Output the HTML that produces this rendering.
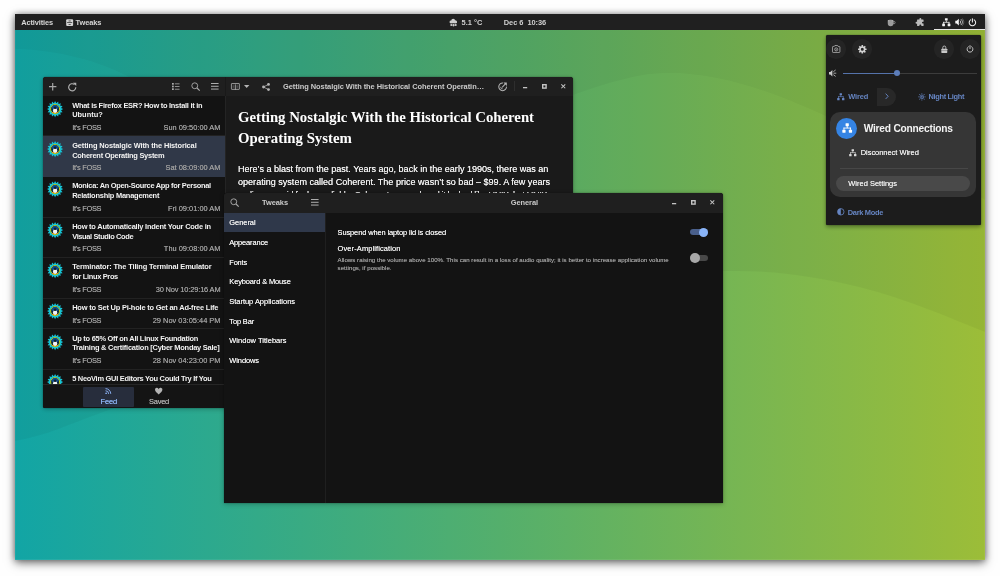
<!DOCTYPE html>
<html lang="en">
<head>
<meta charset="utf-8">
<title>GNOME desktop – Tweaks, NewsFlash and Quick Settings</title>
<style>
*{box-sizing:border-box;margin:0;padding:0}
html,body{width:1000px;height:576px;overflow:hidden;background:#fefefe}
body{position:relative;font-family:"Liberation Sans",sans-serif;color:#e6e6e6;font-size:7.45px;line-height:1}
.abs,#o div{position:absolute}
.t{position:absolute;white-space:pre;line-height:10px;height:10px;text-shadow:0 0 .45px currentColor}
.b{font-weight:bold;text-shadow:none}
#desk{position:absolute;left:15px;top:14px;width:970px;height:545.5px;overflow:hidden;
 background:linear-gradient(90deg,#12a5a5 0%,#33aa88 25%,#54af6c 50%,#78b652 75%,#9cbd38 100%);
 box-shadow:0 3px 9px rgba(0,0,0,.5),0 0 6px rgba(0,0,0,.32),inset 0 -1px 0 rgba(255,255,255,.07),inset 1px 0 0 rgba(255,255,255,.04),inset -1px 0 0 rgba(255,255,255,.05)}
#o{position:absolute;left:-15px;top:-14px;width:1000px;height:576px;will-change:transform}
#o svg{position:absolute;overflow:visible}
#topbar{left:15px;top:14px;width:970px;height:15.7px;background:#202020}
.sh{box-shadow:0 1px 5px rgba(0,0,0,.28),0 0 1px rgba(0,0,0,.8)}
.row{left:0;width:182px;border-bottom:1px solid #222}
.row.sel{background:#303848;border-bottom-color:#303848}
</style>
</head>
<body>
<div id="desk"><div id="o">
<svg id="wall" style="left:0;top:0" width="1000" height="576" viewBox="0 0 1000 576">
<path d="M15 14H985V200C950 180 900 150 830 118C790 100 730 73 668 73C640 73 610 82 573 95C530 112 490 155 420 170C330 190 230 130 127 76C100 62 60 50 15 49Z" fill="#000" opacity=".035"/>
<path d="M15 14H985V332C950 318 910 300 859 287C810 275 770 270 723 271C500 272 250 360 98 414C70 424 45 436 15 441Z" fill="#000" opacity=".04"/>
</svg>
<!-- ================= TOP BAR ================= -->
<div id="topbar"></div>
<svg style="left:65.55px;top:18.75px" width="7.3" height="7.3" viewBox="0 0 16 16" ><rect x=".4" y=".4" width="15.2" height="15.2" rx="2.2" fill="#d4d4d4"/><g fill="#202020"><rect x="2.4" y="7.3" width="11.2" height="1.5"/><rect x="5.6" y="3.6" width="4.8" height="1.5"/><rect x="5.6" y="11" width="4.8" height="1.5"/></g></svg>
<svg style="left:449.30px;top:17.70px" width="9" height="9" viewBox="0 0 18 18" ><g fill="#cdcdcd"><circle cx="8.4" cy="5.2" r="3.8"/><circle cx="12.8" cy="7.4" r="3"/><circle cx="4" cy="7.8" r="2.9"/><rect x="1.6" y="6.6" width="14.4" height="4" rx="2"/><circle cx="4.6" cy="14" r="2.1"/><circle cx="9" cy="14.5" r="2.3"/><circle cx="13.4" cy="14" r="2.1"/></g></svg>
<svg style="left:887.05px;top:18.50px" width="9.5" height="8" viewBox="0 0 19 16" ><g fill="#9c9c9c"><path d="M1.5 3.5h11.5v5.2a5.7 5.7 0 0 1-11.5 0z"/><ellipse cx="7.2" cy="3.7" rx="5.8" ry="2.3" fill="#bdbdbd"/><ellipse cx="7.2" cy="3.9" rx="4.4" ry="1.4" fill="#8a8a8a"/></g><circle cx="14" cy="7.2" r="2.300" fill="none" stroke="#9c9c9c" stroke-width="1.500"/></svg>
<svg style="left:915.70px;top:18.10px" width="8.6" height="8.6" viewBox="0 0 16 16" ><path fill="#bcbcbc" d="M6.4 1.6a1.7 1.7 0 0 1 3.4 0v1.2h3.3a1 1 0 0 1 1 1v3h-1.2a1.8 1.8 0 0 0 0 3.6h1.2v3.6a1 1 0 0 1-1 1H9.9v-1.2a1.8 1.8 0 0 0-3.6 0V15H3a1 1 0 0 1-1-1v-3.4H1a1.8 1.8 0 0 1 0-3.6h1V3.8a1 1 0 0 1 1-1h3.4z"/></svg>
<div style="left:934px;top:28.6px;width:51px;height:1px;background:#e8e8e8"></div>
<svg style="left:942.20px;top:18.10px" width="8.6" height="8.4" viewBox="0 0 16 16" ><g fill="#f4f4f4"><rect x="5.4" y="0.4" width="5.2" height="4.6" rx=".6"/><rect x="7.3" y="4.8" width="1.4" height="3.4"/><rect x="2.1" y="7.4" width="11.8" height="1.4"/><rect x="2.1" y="7.4" width="1.4" height="3.6"/><rect x="12.5" y="7.4" width="1.4" height="3.6"/><rect x="0.2" y="10.7" width="5.2" height="4.8" rx=".6"/><rect x="10.6" y="10.7" width="5.2" height="4.8" rx=".6"/></g></svg>
<svg style="left:954.80px;top:18.20px" width="8.8" height="8.2" viewBox="0 0 17 16" ><g fill="#f4f4f4"><path d="M.5 5.3h2.7L7.4 1.3v13.4L3.2 10.7H.5z"/><path d="M9.2 4.2a4.3 4.3 0 0 1 0 7.6v-1.7a2.8 2.8 0 0 0 0-4.2z"/><path d="M11.4 1.8a7 7 0 0 1 0 12.4l-.7-1.2a5.7 5.7 0 0 0 0-10z" opacity=".8"/><path d="M13.9.3a9.2 9.2 0 0 1 0 15.4l-.7-1.1a7.9 7.9 0 0 0 0-13.2z" opacity=".4"/></g></svg>
<svg style="left:968.40px;top:17.90px" width="8.8" height="8.8" viewBox="0 0 16 16" ><g stroke="#f4f4f4"><g fill="none" stroke-width="1.9" stroke-linecap="round"><path d="M8 1.2v6"/><path d="M4.7 3.4a5.9 5.9 0 1 0 6.6 0"/></g></g></svg>
<span class="t b" style="left:21.2px;top:17.9px;color:#d6d6d6;letter-spacing:-0.118px">Activities</span>
<span class="t b" style="left:75.6px;top:17.9px;color:#d6d6d6;letter-spacing:-0.121px">Tweaks</span>
<span class="t b" style="left:461.5px;top:17.9px;color:#d0d0d0;letter-spacing:0.039px">5.1 °C</span>
<span class="t b" style="left:503.8px;top:17.9px;color:#d0d0d0;letter-spacing:-0.051px">Dec 6  10:36</span>
<!-- ================= FEED READER ================= -->
<div class="sh" style="left:43px;top:76.6px;width:530.4px;height:331.8px;background:#1a1a1a;border-radius:3px 3px 2px 2px"></div>
<div style="left:43px;top:76.6px;width:530.4px;height:19.4px;background:#1f1f1f;border-radius:3px 3px 0 0"></div>
<div style="left:225px;top:76.6px;width:1px;height:19.4px;background:#191919"></div>
<div style="left:225px;top:96px;width:1px;height:312.4px;background:#242424"></div>
<div id="list" style="left:43px;top:96px;width:182px;height:312.4px;background:#131313;overflow:hidden;border-radius:0 0 0 2px">
<div class="row" style="top:0.00px;height:40.40px"></div>
<svg class="foss" style="left:4.2px;top:4.5px" width="16.2" height="16.2" viewBox="-10 -10 20 20"><path fill="#16c4d6" d="M0.00 -10.00L1.46 -7.36L3.83 -9.24L4.17 -6.24L7.07 -7.07L6.24 -4.17L9.24 -3.83L7.36 -1.46L10.00 0.00L7.36 1.46L9.24 3.83L6.24 4.17L7.07 7.07L4.17 6.24L3.83 9.24L1.46 7.36L0.00 10.00L-1.46 7.36L-3.83 9.24L-4.17 6.24L-7.07 7.07L-6.24 4.17L-9.24 3.83L-7.36 1.46L-10.00 0.00L-7.36 -1.46L-9.24 -3.83L-6.24 -4.17L-7.07 -7.07L-4.17 -6.24L-3.83 -9.24L-1.46 -7.36Z"/><circle r="7.6" fill="#16c4d6"/><circle r="5.9" fill="#0d2a3a"/><circle r="5.6" fill="none" stroke="#c9d414" stroke-width="1.2"/><path d="M-4.6-1.2a4.7 4.7 0 0 1 9.2 0L2.2 0.2h-4.4z" fill="#0c4f96"/><ellipse cx="0" cy="1.9" rx="2.7" ry="3" fill="#f4f4f4"/><ellipse cx="0" cy="-1.6" rx="1.7" ry="1.6" fill="#15222c"/><path d="M-3.6 3.6h2.2v1.3h-2.6zM1.4 3.6h2.2l.4 1.3H1.4z" fill="#f29a1c"/></svg>
<div class="row sel" style="top:40.40px;height:40.85px"></div>
<svg class="foss" style="left:4.2px;top:44.9px" width="16.2" height="16.2" viewBox="-10 -10 20 20"><path fill="#16c4d6" d="M0.00 -10.00L1.46 -7.36L3.83 -9.24L4.17 -6.24L7.07 -7.07L6.24 -4.17L9.24 -3.83L7.36 -1.46L10.00 0.00L7.36 1.46L9.24 3.83L6.24 4.17L7.07 7.07L4.17 6.24L3.83 9.24L1.46 7.36L0.00 10.00L-1.46 7.36L-3.83 9.24L-4.17 6.24L-7.07 7.07L-6.24 4.17L-9.24 3.83L-7.36 1.46L-10.00 0.00L-7.36 -1.46L-9.24 -3.83L-6.24 -4.17L-7.07 -7.07L-4.17 -6.24L-3.83 -9.24L-1.46 -7.36Z"/><circle r="7.6" fill="#16c4d6"/><circle r="5.9" fill="#0d2a3a"/><circle r="5.6" fill="none" stroke="#c9d414" stroke-width="1.2"/><path d="M-4.6-1.2a4.7 4.7 0 0 1 9.2 0L2.2 0.2h-4.4z" fill="#0c4f96"/><ellipse cx="0" cy="1.9" rx="2.7" ry="3" fill="#f4f4f4"/><ellipse cx="0" cy="-1.6" rx="1.7" ry="1.6" fill="#15222c"/><path d="M-3.6 3.6h2.2v1.3h-2.6zM1.4 3.6h2.2l.4 1.3H1.4z" fill="#f29a1c"/></svg>
<div class="row" style="top:81.25px;height:40.60px"></div>
<svg class="foss" style="left:4.2px;top:85.3px" width="16.2" height="16.2" viewBox="-10 -10 20 20"><path fill="#16c4d6" d="M0.00 -10.00L1.46 -7.36L3.83 -9.24L4.17 -6.24L7.07 -7.07L6.24 -4.17L9.24 -3.83L7.36 -1.46L10.00 0.00L7.36 1.46L9.24 3.83L6.24 4.17L7.07 7.07L4.17 6.24L3.83 9.24L1.46 7.36L0.00 10.00L-1.46 7.36L-3.83 9.24L-4.17 6.24L-7.07 7.07L-6.24 4.17L-9.24 3.83L-7.36 1.46L-10.00 0.00L-7.36 -1.46L-9.24 -3.83L-6.24 -4.17L-7.07 -7.07L-4.17 -6.24L-3.83 -9.24L-1.46 -7.36Z"/><circle r="7.6" fill="#16c4d6"/><circle r="5.9" fill="#0d2a3a"/><circle r="5.6" fill="none" stroke="#c9d414" stroke-width="1.2"/><path d="M-4.6-1.2a4.7 4.7 0 0 1 9.2 0L2.2 0.2h-4.4z" fill="#0c4f96"/><ellipse cx="0" cy="1.9" rx="2.7" ry="3" fill="#f4f4f4"/><ellipse cx="0" cy="-1.6" rx="1.7" ry="1.6" fill="#15222c"/><path d="M-3.6 3.6h2.2v1.3h-2.6zM1.4 3.6h2.2l.4 1.3H1.4z" fill="#f29a1c"/></svg>
<div class="row" style="top:121.85px;height:40.30px"></div>
<svg class="foss" style="left:4.2px;top:125.9px" width="16.2" height="16.2" viewBox="-10 -10 20 20"><path fill="#16c4d6" d="M0.00 -10.00L1.46 -7.36L3.83 -9.24L4.17 -6.24L7.07 -7.07L6.24 -4.17L9.24 -3.83L7.36 -1.46L10.00 0.00L7.36 1.46L9.24 3.83L6.24 4.17L7.07 7.07L4.17 6.24L3.83 9.24L1.46 7.36L0.00 10.00L-1.46 7.36L-3.83 9.24L-4.17 6.24L-7.07 7.07L-6.24 4.17L-9.24 3.83L-7.36 1.46L-10.00 0.00L-7.36 -1.46L-9.24 -3.83L-6.24 -4.17L-7.07 -7.07L-4.17 -6.24L-3.83 -9.24L-1.46 -7.36Z"/><circle r="7.6" fill="#16c4d6"/><circle r="5.9" fill="#0d2a3a"/><circle r="5.6" fill="none" stroke="#c9d414" stroke-width="1.2"/><path d="M-4.6-1.2a4.7 4.7 0 0 1 9.2 0L2.2 0.2h-4.4z" fill="#0c4f96"/><ellipse cx="0" cy="1.9" rx="2.7" ry="3" fill="#f4f4f4"/><ellipse cx="0" cy="-1.6" rx="1.7" ry="1.6" fill="#15222c"/><path d="M-3.6 3.6h2.2v1.3h-2.6zM1.4 3.6h2.2l.4 1.3H1.4z" fill="#f29a1c"/></svg>
<div class="row" style="top:162.15px;height:40.50px"></div>
<svg class="foss" style="left:4.2px;top:166.2px" width="16.2" height="16.2" viewBox="-10 -10 20 20"><path fill="#16c4d6" d="M0.00 -10.00L1.46 -7.36L3.83 -9.24L4.17 -6.24L7.07 -7.07L6.24 -4.17L9.24 -3.83L7.36 -1.46L10.00 0.00L7.36 1.46L9.24 3.83L6.24 4.17L7.07 7.07L4.17 6.24L3.83 9.24L1.46 7.36L0.00 10.00L-1.46 7.36L-3.83 9.24L-4.17 6.24L-7.07 7.07L-6.24 4.17L-9.24 3.83L-7.36 1.46L-10.00 0.00L-7.36 -1.46L-9.24 -3.83L-6.24 -4.17L-7.07 -7.07L-4.17 -6.24L-3.83 -9.24L-1.46 -7.36Z"/><circle r="7.6" fill="#16c4d6"/><circle r="5.9" fill="#0d2a3a"/><circle r="5.6" fill="none" stroke="#c9d414" stroke-width="1.2"/><path d="M-4.6-1.2a4.7 4.7 0 0 1 9.2 0L2.2 0.2h-4.4z" fill="#0c4f96"/><ellipse cx="0" cy="1.9" rx="2.7" ry="3" fill="#f4f4f4"/><ellipse cx="0" cy="-1.6" rx="1.7" ry="1.6" fill="#15222c"/><path d="M-3.6 3.6h2.2v1.3h-2.6zM1.4 3.6h2.2l.4 1.3H1.4z" fill="#f29a1c"/></svg>
<div class="row" style="top:202.65px;height:30.80px"></div>
<svg class="foss" style="left:4.2px;top:206.7px" width="16.2" height="16.2" viewBox="-10 -10 20 20"><path fill="#16c4d6" d="M0.00 -10.00L1.46 -7.36L3.83 -9.24L4.17 -6.24L7.07 -7.07L6.24 -4.17L9.24 -3.83L7.36 -1.46L10.00 0.00L7.36 1.46L9.24 3.83L6.24 4.17L7.07 7.07L4.17 6.24L3.83 9.24L1.46 7.36L0.00 10.00L-1.46 7.36L-3.83 9.24L-4.17 6.24L-7.07 7.07L-6.24 4.17L-9.24 3.83L-7.36 1.46L-10.00 0.00L-7.36 -1.46L-9.24 -3.83L-6.24 -4.17L-7.07 -7.07L-4.17 -6.24L-3.83 -9.24L-1.46 -7.36Z"/><circle r="7.6" fill="#16c4d6"/><circle r="5.9" fill="#0d2a3a"/><circle r="5.6" fill="none" stroke="#c9d414" stroke-width="1.2"/><path d="M-4.6-1.2a4.7 4.7 0 0 1 9.2 0L2.2 0.2h-4.4z" fill="#0c4f96"/><ellipse cx="0" cy="1.9" rx="2.7" ry="3" fill="#f4f4f4"/><ellipse cx="0" cy="-1.6" rx="1.7" ry="1.6" fill="#15222c"/><path d="M-3.6 3.6h2.2v1.3h-2.6zM1.4 3.6h2.2l.4 1.3H1.4z" fill="#f29a1c"/></svg>
<div class="row" style="top:233.45px;height:40.50px"></div>
<svg class="foss" style="left:4.2px;top:237.5px" width="16.2" height="16.2" viewBox="-10 -10 20 20"><path fill="#16c4d6" d="M0.00 -10.00L1.46 -7.36L3.83 -9.24L4.17 -6.24L7.07 -7.07L6.24 -4.17L9.24 -3.83L7.36 -1.46L10.00 0.00L7.36 1.46L9.24 3.83L6.24 4.17L7.07 7.07L4.17 6.24L3.83 9.24L1.46 7.36L0.00 10.00L-1.46 7.36L-3.83 9.24L-4.17 6.24L-7.07 7.07L-6.24 4.17L-9.24 3.83L-7.36 1.46L-10.00 0.00L-7.36 -1.46L-9.24 -3.83L-6.24 -4.17L-7.07 -7.07L-4.17 -6.24L-3.83 -9.24L-1.46 -7.36Z"/><circle r="7.6" fill="#16c4d6"/><circle r="5.9" fill="#0d2a3a"/><circle r="5.6" fill="none" stroke="#c9d414" stroke-width="1.2"/><path d="M-4.6-1.2a4.7 4.7 0 0 1 9.2 0L2.2 0.2h-4.4z" fill="#0c4f96"/><ellipse cx="0" cy="1.9" rx="2.7" ry="3" fill="#f4f4f4"/><ellipse cx="0" cy="-1.6" rx="1.7" ry="1.6" fill="#15222c"/><path d="M-3.6 3.6h2.2v1.3h-2.6zM1.4 3.6h2.2l.4 1.3H1.4z" fill="#f29a1c"/></svg>
<div class="row" style="top:273.95px;height:40.40px"></div>
<svg class="foss" style="left:4.2px;top:278.0px" width="16.2" height="16.2" viewBox="-10 -10 20 20"><path fill="#16c4d6" d="M0.00 -10.00L1.46 -7.36L3.83 -9.24L4.17 -6.24L7.07 -7.07L6.24 -4.17L9.24 -3.83L7.36 -1.46L10.00 0.00L7.36 1.46L9.24 3.83L6.24 4.17L7.07 7.07L4.17 6.24L3.83 9.24L1.46 7.36L0.00 10.00L-1.46 7.36L-3.83 9.24L-4.17 6.24L-7.07 7.07L-6.24 4.17L-9.24 3.83L-7.36 1.46L-10.00 0.00L-7.36 -1.46L-9.24 -3.83L-6.24 -4.17L-7.07 -7.07L-4.17 -6.24L-3.83 -9.24L-1.46 -7.36Z"/><circle r="7.6" fill="#16c4d6"/><circle r="5.9" fill="#0d2a3a"/><circle r="5.6" fill="none" stroke="#c9d414" stroke-width="1.2"/><path d="M-4.6-1.2a4.7 4.7 0 0 1 9.2 0L2.2 0.2h-4.4z" fill="#0c4f96"/><ellipse cx="0" cy="1.9" rx="2.7" ry="3" fill="#f4f4f4"/><ellipse cx="0" cy="-1.6" rx="1.7" ry="1.6" fill="#15222c"/><path d="M-3.6 3.6h2.2v1.3h-2.6zM1.4 3.6h2.2l.4 1.3H1.4z" fill="#f29a1c"/></svg>
</div>
<span class="t b" style="left:72.2px;top:100.5px;color:#f2f2f2;letter-spacing:-0.261px">What is Firefox ESR? How to Install it in</span>
<span class="t b" style="left:72.2px;top:110.1px;color:#f2f2f2">Ubuntu?</span>
<span class="t" style="left:72.2px;top:122.9px;color:#9c9c9c;letter-spacing:-0.277px">It's FOSS</span>
<span class="t" style="right:779.5px;top:122.9px;color:#9c9c9c">Sun 09:50:00 AM</span>
<span class="t b" style="left:72.2px;top:140.9px;color:#f2f2f2;letter-spacing:-0.121px">Getting Nostalgic With the Historical</span>
<span class="t b" style="left:72.2px;top:150.5px;color:#f2f2f2;letter-spacing:-0.247px">Coherent Operating System</span>
<span class="t" style="left:72.2px;top:163.3px;color:#9c9c9c;letter-spacing:-0.277px">It's FOSS</span>
<span class="t" style="right:779.5px;top:163.3px;color:#9c9c9c">Sat 08:09:00 AM</span>
<span class="t b" style="left:72.2px;top:181.3px;color:#f2f2f2;letter-spacing:-0.297px">Monica: An Open-Source App for Personal</span>
<span class="t b" style="left:72.2px;top:190.9px;color:#f2f2f2;letter-spacing:-0.224px">Relationship Management</span>
<span class="t" style="left:72.2px;top:203.7px;color:#9c9c9c;letter-spacing:-0.277px">It's FOSS</span>
<span class="t" style="right:779.5px;top:203.7px;color:#9c9c9c">Fri 09:01:00 AM</span>
<span class="t b" style="left:72.2px;top:221.9px;color:#f2f2f2;letter-spacing:-0.217px">How to Automatically Indent Your Code in</span>
<span class="t b" style="left:72.2px;top:231.5px;color:#f2f2f2;letter-spacing:-0.369px">Visual Studio Code</span>
<span class="t" style="left:72.2px;top:244.3px;color:#9c9c9c;letter-spacing:-0.277px">It's FOSS</span>
<span class="t" style="right:779.5px;top:244.3px;color:#9c9c9c">Thu 09:08:00 AM</span>
<span class="t b" style="left:72.2px;top:262.2px;color:#f2f2f2;letter-spacing:-0.134px">Terminator: The Tiling Terminal Emulator</span>
<span class="t b" style="left:72.2px;top:271.8px;color:#f2f2f2;letter-spacing:-0.337px">for Linux Pros</span>
<span class="t" style="left:72.2px;top:284.6px;color:#9c9c9c;letter-spacing:-0.277px">It's FOSS</span>
<span class="t" style="right:779.5px;top:284.6px;color:#9c9c9c;letter-spacing:-0.145px">30 Nov 10:29:16 AM</span>
<span class="t b" style="left:72.2px;top:302.7px;color:#f2f2f2;letter-spacing:-0.195px">How to Set Up Pi-hole to Get an Ad-free Life</span>
<span class="t" style="left:72.2px;top:315.5px;color:#9c9c9c;letter-spacing:-0.277px">It's FOSS</span>
<span class="t" style="right:779.5px;top:315.5px;color:#9c9c9c">29 Nov 03:05:44 PM</span>
<span class="t b" style="left:72.2px;top:333.5px;color:#f2f2f2;letter-spacing:-0.266px">Up to 65% Off on All Linux Foundation</span>
<span class="t b" style="left:72.2px;top:343.1px;color:#f2f2f2;letter-spacing:-0.231px">Training &amp; Certification [Cyber Monday Sale]</span>
<span class="t" style="left:72.2px;top:355.9px;color:#9c9c9c;letter-spacing:-0.277px">It's FOSS</span>
<span class="t" style="right:779.5px;top:355.9px;color:#9c9c9c">28 Nov 04:23:00 PM</span>
<span class="t b" style="left:72.2px;top:374.0px;color:#f2f2f2;letter-spacing:-0.275px">5 NeoVim GUI Editors You Could Try If You</span>
<div style="left:43px;top:384px;width:182px;height:24.4px;background:#141414;border-top:1px solid #262626;border-radius:0 0 0 2px"></div>
<div style="left:83.1px;top:387.1px;width:50.9px;height:19.6px;background:#272d3c;border-radius:1px"></div>
<span class="t" style="left:100.6px;top:397.0px;color:#8ab0f0;letter-spacing:-0.138px">Feed</span><span class="t" style="left:149.0px;top:397.0px;color:#a8a8a8;letter-spacing:-0.219px">Saved</span>
<span class="t b" style="left:283.0px;top:81.6px;color:#cacaca;letter-spacing:-0.047px">Getting Nostalgic With the Historical Coherent Operatin…</span>
<svg style="left:49.20px;top:82.80px" width="7.4" height="7.4" viewBox="0 0 7.4 7.4" ><path d="M3.7 0v7.4M0 3.7h7.4" stroke="#a6a6a6" stroke-width="1.2" fill="none"/></svg>
<svg style="left:66.70px;top:81.60px" width="10.6" height="10.6" viewBox="0 0 16 16" ><path d="M13.3 8a5.4 5.4 0 1 1-2-4.2" fill="none" stroke="#b4b4b4" stroke-width="1.7"/><path d="M9 1.2h5v5z" fill="#b4b4b4"/></svg>
<svg style="left:172.40px;top:83.00px" width="7.6" height="7" viewBox="0 0 15 14" ><g fill="#b4b4b4"><rect x="0" y="0" width="3.4" height="3.4"/><rect x="0" y="5.3" width="3.4" height="3.4"/><rect x="0" y="10.6" width="3.4" height="3.4"/><rect x="5.6" y="1" width="9.4" height="1.5"/><rect x="5.6" y="6.3" width="9.4" height="1.5"/><rect x="5.6" y="11.6" width="9.4" height="1.5"/></g></svg>
<svg style="left:190.80px;top:82.10px" width="9.4" height="9.4" viewBox="0 0 16 16" ><circle cx="6.4" cy="6.4" r="5" fill="none" stroke="#a8a8a8" stroke-width="1.6"/><path d="M10.2 10.2l4.6 4.6" stroke="#a8a8a8" stroke-width="1.9"/></svg>
<svg style="left:210.80px;top:83.20px" width="7.6" height="6.6" viewBox="0 0 15 13" ><g fill="#b4b4b4"><rect y="0" width="15" height="1.9"/><rect y="5.5" width="15" height="1.9"/><rect y="11" width="15" height="1.9"/></g></svg>
<svg style="left:230.80px;top:82.80px" width="8.8" height="7.4" viewBox="0 0 17 14" ><g fill="none" stroke="#b4b4b4" stroke-width="1.5"><rect x=".8" y=".8" width="15.4" height="11.4" rx=".8"/><path d="M8.5 2.5v10.5"/></g><path d="M3 4h3.6M3 6.5h3.6M3 9h3.6M10.4 4H14M10.4 6.5H14M10.4 9H14" stroke="#b4b4b4" stroke-width=".9" opacity=".7"/></svg>
<svg style="left:243.70px;top:85.40px" width="5.4" height="3" viewBox="0 0 9 5" ><path d="M0 0h9L4.5 5z" fill="#b4b4b4"/></svg>
<svg style="left:261.80px;top:82.50px" width="8" height="8" viewBox="0 0 16 16" ><g fill="#b4b4b4"><circle cx="3" cy="8" r="2.8"/><circle cx="13" cy="2.8" r="2.8"/><circle cx="13" cy="13.2" r="2.8"/></g><path d="M13 2.7L3 8l10 5.3" fill="none" stroke="#b4b4b4" stroke-width="1.5"/></svg>
<svg style="left:497.90px;top:82.00px" width="9.4" height="9.4" viewBox="0 0 17 17" ><path d="M9 1.700A7 7 0 1 0 15.400 8.400" fill="none" stroke="#b4b4b4" stroke-width="1.900"/><path d="M7.400 9.600l6-6" stroke="#b4b4b4" stroke-width="1.900"/><path d="M9.800 1h6.200v6.200z" fill="#b4b4b4"/><path d="M4.800 8.800a3.600 3.600 0 0 0 3.600 3.600" fill="none" stroke="#b4b4b4" stroke-width="1.500"/></svg>
<div style="left:513.5px;top:81.4px;width:1px;height:10px;background:#2e2e2e"></div>
<svg style="left:523.00px;top:87.15px" width="4.2" height="1.3" viewBox="0 0 4.2 1.3" ><rect width="4.2" height="1.3" fill="#c4c4c4"/></svg>
<svg style="left:541.90px;top:84.20px" width="4.8" height="4.8" viewBox="0 0 4.8 4.8" ><rect x=".7" y=".7" width="3.4" height="3.4" fill="none" stroke="#c4c4c4" stroke-width="1.4"/></svg>
<svg style="left:561.30px;top:84.30px" width="4.6" height="4.6" viewBox="0 0 8 8" ><path d="M.6 .6l6.800 6.800M7.400 .6l-6.800 6.800" stroke="#c4c4c4" stroke-width="1.800" fill="none"/></svg>
<svg style="left:105.40px;top:387.80px" width="6.4" height="6.4" viewBox="0 0 12 12" ><g fill="none" stroke="#8ab0f0" stroke-width="1.8"><path d="M1 1.2A9.8 9.8 0 0 1 10.8 11"/><path d="M1 5.2A5.8 5.8 0 0 1 6.8 11"/></g><circle cx="2.1" cy="9.9" r="1.6" fill="#8ab0f0"/></svg>
<svg style="left:154.70px;top:388.00px" width="7.4" height="6.4" viewBox="0 0 15 13" ><path fill="#b4b4b4" d="M7.5 13C3 9.4 0 6.9 0 3.8A3.7 3.7 0 0 1 7.5 2.4 3.7 3.7 0 0 1 15 3.8C15 6.9 12 9.4 7.5 13z"/></svg>
<span class="t b" style="left:238.0px;top:105.50px;font-family:'Liberation Serif',serif;font-size:14.8px;line-height:22px;height:22px;color:#fff;letter-spacing:-0.025px">Getting Nostalgic With the Historical Coherent</span>
<span class="t b" style="left:238.0px;top:127.41px;font-family:'Liberation Serif',serif;font-size:14.8px;line-height:22px;height:22px;color:#fff">Operating System</span>
<span class="t" style="left:238.0px;top:162.96px;font-size:9.05px;line-height:13px;height:13px;color:#f0f0f0;letter-spacing:-0.004px">Here’s a blast from the past. Years ago, back in the early 1990s, there was an</span>
<span class="t" style="left:238.0px;top:176.06px;font-size:9.05px;line-height:13px;height:13px;color:#f0f0f0;letter-spacing:0.005px">operating system called Coherent. The price wasn’t so bad – $99. A few years</span>
<span class="t" style="left:238.0px;top:189.16px;font-size:9.05px;line-height:13px;height:13px;color:#f0f0f0;letter-spacing:-0.354px">earlier, we paid far less reliable. Coherent seemed, and it looked like UNIX, but UNIX</span>
<!-- ================= TWEAKS ================= -->
<div class="sh" style="left:224px;top:192.5px;width:498.5px;height:310.5px;background:#131313;border-radius:3px 3px 0 0"></div>
<div style="left:224px;top:192.5px;width:498.5px;height:20.2px;background:#1f1f1f;border-radius:3px 3px 0 0"></div>
<div style="left:325px;top:192.5px;width:1px;height:310.5px;background:#1f1f1f"></div>
<div style="left:224px;top:212.7px;width:101px;height:19.7px;background:#2f384a"></div>
<span class="t b" style="left:262.0px;top:197.7px;color:#cacaca;letter-spacing:-0.055px">Tweaks</span>
<span class="t b" style="left:510.8px;top:197.7px;color:#cacaca;letter-spacing:-0.072px">General</span>
<span class="t" style="left:229.3px;top:218.2px;color:#ececec;letter-spacing:-0.024px">General</span>
<span class="t" style="left:229.3px;top:237.9px;color:#ececec;letter-spacing:-0.143px">Appearance</span>
<span class="t" style="left:229.3px;top:257.5px;color:#ececec;letter-spacing:-0.182px">Fonts</span>
<span class="t" style="left:229.3px;top:277.2px;color:#ececec;letter-spacing:-0.117px">Keyboard &amp; Mouse</span>
<span class="t" style="left:229.3px;top:296.8px;color:#ececec;letter-spacing:-0.003px">Startup Applications</span>
<span class="t" style="left:229.3px;top:316.5px;color:#ececec;letter-spacing:-0.134px">Top Bar</span>
<span class="t" style="left:229.3px;top:336.2px;color:#ececec;letter-spacing:0.035px">Window Titlebars</span>
<span class="t" style="left:229.3px;top:355.8px;color:#ececec;letter-spacing:-0.067px">Windows</span>
<span class="t" style="left:337.6px;top:228.1px;color:#ececec;letter-spacing:-0.111px">Suspend when laptop lid is closed</span>
<span class="t" style="left:337.6px;top:243.7px;color:#ececec;letter-spacing:0.124px">Over-Amplification</span>
<span class="t" style="left:337.6px;top:255.5px;font-size:6.1px;line-height:8.2px;height:8.2px;color:#989898;letter-spacing:0.030px">Allows raising the volume above 100%. This can result in a loss of audio quality; it is better to increase application volume</span>
<span class="t" style="left:337.6px;top:263.7px;font-size:6.1px;line-height:8.2px;height:8.2px;color:#989898;letter-spacing:0.037px">settings, if possible.</span>
<svg style="left:229.60px;top:198.30px" width="9.4" height="9.4" viewBox="0 0 16 16" ><circle cx="6.4" cy="6.4" r="5" fill="none" stroke="#a8a8a8" stroke-width="1.6"/><path d="M10.2 10.2l4.6 4.6" stroke="#a8a8a8" stroke-width="1.9"/></svg>
<svg style="left:311.40px;top:199.40px" width="7.6" height="6.6" viewBox="0 0 15 13" ><g fill="#b4b4b4"><rect y="0" width="15" height="1.9"/><rect y="5.5" width="15" height="1.9"/><rect y="11" width="15" height="1.9"/></g></svg>
<svg style="left:672.10px;top:203.25px" width="4.2" height="1.3" viewBox="0 0 4.2 1.3" ><rect width="4.2" height="1.3" fill="#c4c4c4"/></svg>
<svg style="left:690.90px;top:200.30px" width="4.8" height="4.8" viewBox="0 0 4.8 4.8" ><rect x=".7" y=".7" width="3.4" height="3.4" fill="none" stroke="#c4c4c4" stroke-width="1.4"/></svg>
<svg style="left:710.10px;top:200.40px" width="4.6" height="4.6" viewBox="0 0 8 8" ><path d="M.6 .6l6.800 6.800M7.400 .6l-6.800 6.800" stroke="#c4c4c4" stroke-width="1.800" fill="none"/></svg>
<div style="left:690px;top:229.3px;width:18.4px;height:6.2px;border-radius:3.1px;background:#4a608c"></div>
<div style="left:698.6px;top:227.5px;width:9.8px;height:9.8px;border-radius:50%;background:#8ab4f8"></div>
<div style="left:690px;top:254.6px;width:18.4px;height:6.2px;border-radius:3.1px;background:#484848"></div>
<div style="left:690px;top:252.8px;width:9.8px;height:9.8px;border-radius:50%;background:#a8a8a8"></div>
<!-- ================= QUICK SETTINGS ================= -->
<div style="box-shadow:0 2px 4px rgba(0,0,0,.38),0 0 1px rgba(0,0,0,.8);left:825.6px;top:34.9px;width:155px;height:190.5px;background:#1c1c1c;border-radius:1.5px"></div>
<div style="left:830.2px;top:111.7px;width:146px;height:85.6px;background:#363636;border-radius:10px"></div>
<div style="left:840.3px;top:168px;width:127.5px;height:.8px;background:#474747"></div>
<div style="left:836px;top:175.5px;width:134px;height:15.9px;background:#494949;border-radius:8px"></div>
<span class="t b" style="left:848.2px;top:92.2px;color:#6685c2;letter-spacing:-0.122px">Wired</span>
<span class="t b" style="left:928.6px;top:92.2px;color:#6685c2;letter-spacing:-0.341px">Night Light</span>
<span class="t b" style="left:863.7px;top:121.7px;font-size:10.2px;line-height:13.8px;height:13.8px;color:#f4f4f4;letter-spacing:-0.214px">Wired Connections</span>
<span class="t" style="left:860.7px;top:148.4px;color:#e8e8e8;letter-spacing:-0.011px">Disconnect Wired</span>
<span class="t" style="left:848.3px;top:179.0px;color:#e8e8e8;letter-spacing:0.023px">Wired Settings</span>
<span class="t b" style="left:847.8px;top:207.8px;color:#6685c2;letter-spacing:-0.315px">Dark Mode</span>
<div style="left:826.2px;top:39.2px;width:19.6px;height:19.6px;border-radius:50%;background:#242424"></div>
<div style="left:852.3px;top:39.2px;width:19.6px;height:19.6px;border-radius:50%;background:#242424"></div>
<div style="left:934.1px;top:39.2px;width:19.6px;height:19.6px;border-radius:50%;background:#242424"></div>
<div style="left:960.2px;top:39.2px;width:19.6px;height:19.6px;border-radius:50%;background:#242424"></div>
<svg style="left:831.80px;top:44.80px" width="8.4" height="8" viewBox="0 0 17 16" ><g fill="none" stroke="#c8c8c8" stroke-width="1.4"><path d="M1 4.2a1.4 1.4 0 0 1 1.4-1.4H4.6L5.8 .9h5.4l1.2 1.9h2.2A1.4 1.4 0 0 1 16 4.2v9.4a1.4 1.4 0 0 1-1.4 1.4H2.4A1.4 1.4 0 0 1 1 13.600z"/><circle cx="8.5" cy="8.8" r="3.1"/></g><circle cx="8.5" cy="8.8" r="1" fill="#c8c8c8"/></svg>
<svg style="left:857.80px;top:44.70px" width="8.6" height="8.6" viewBox="-8 -8 16 16" ><g fill="#d2d2d2"><rect x="-1.5" y="-8" width="3" height="4" rx=".5" transform="rotate(0)"/><rect x="-1.5" y="-8" width="3" height="4" rx=".5" transform="rotate(45)"/><rect x="-1.5" y="-8" width="3" height="4" rx=".5" transform="rotate(90)"/><rect x="-1.5" y="-8" width="3" height="4" rx=".5" transform="rotate(135)"/><rect x="-1.5" y="-8" width="3" height="4" rx=".5" transform="rotate(180)"/><rect x="-1.5" y="-8" width="3" height="4" rx=".5" transform="rotate(225)"/><rect x="-1.5" y="-8" width="3" height="4" rx=".5" transform="rotate(270)"/><rect x="-1.5" y="-8" width="3" height="4" rx=".5" transform="rotate(315)"/></g><circle r="4.3" fill="none" stroke="#d2d2d2" stroke-width="3"/></svg>
<svg style="left:940.60px;top:44.70px" width="6.6" height="8.4" viewBox="0 0 13 17" ><path d="M3.4 8V5.2a3.1 3.1 0 0 1 6.200 0V8" fill="none" stroke="#c8c8c8" stroke-width="1.8"/><rect x=".5" y="7.4" width="12" height="9" rx="1" fill="#c8c8c8"/><rect x=".5" y="10.6" width="12" height="1" fill="#242424" opacity=".5"/></svg>
<svg style="left:966.00px;top:45.00px" width="8" height="8" viewBox="0 0 16 16" ><g stroke="#c8c8c8"><g fill="none" stroke-width="1.9" stroke-linecap="round"><path d="M8 1.2v6"/><path d="M4.7 3.4a5.9 5.9 0 1 0 6.6 0"/></g></g></svg>
<svg style="left:828.70px;top:69.10px" width="7.8" height="8.4" viewBox="0 0 15 16" ><path d="M0 5.600h2.500L6.500 1.800v12.400L2.500 10.400H0z" fill="#c8c8c8"/><path d="M8.600 8h5.400M8.300 5.200l4.500-3.400M8.300 10.800l4.500 3.400" stroke="#c8c8c8" stroke-width="1.5" fill="none"/></svg>
<div style="left:843px;top:72.8px;width:134px;height:1.1px;background:#3c3c3c"></div>
<div style="left:843px;top:72.6px;width:54px;height:1.5px;background:#5573ab"></div>
<div style="left:894.2px;top:70.3px;width:6px;height:6px;border-radius:50%;background:#5c7dba"></div>
<svg style="left:837.40px;top:92.90px" width="7.6" height="7.4" viewBox="0 0 16 16" ><g fill="#6685c2"><rect x="5.4" y="0.4" width="5.2" height="4.6" rx=".6"/><rect x="7.3" y="4.8" width="1.4" height="3.4"/><rect x="2.1" y="7.4" width="11.8" height="1.4"/><rect x="2.1" y="7.4" width="1.4" height="3.6"/><rect x="12.5" y="7.4" width="1.4" height="3.6"/><rect x="0.2" y="10.7" width="5.2" height="4.8" rx=".6"/><rect x="10.6" y="10.7" width="5.2" height="4.8" rx=".6"/></g></svg>
<div style="left:877px;top:87.6px;width:19px;height:18px;background:#282828;border-radius:0 9px 9px 0"></div>
<svg style="left:884.90px;top:93.40px" width="3.8" height="6.6" viewBox="0 0 6 10" ><path d="M1 .8l4 4.200-4 4.200" fill="none" stroke="#6685c2" stroke-width="1.500"/></svg>
<svg style="left:917.50px;top:92.80px" width="7.8" height="7.8" viewBox="-8 -8 16 16" ><g fill="#6685c2"><rect x="-.7" y="-7.600" width="1.400" height="2.400" transform="rotate(0)"/><rect x="-.7" y="-7.600" width="1.400" height="2.400" transform="rotate(45)"/><rect x="-.7" y="-7.600" width="1.400" height="2.400" transform="rotate(90)"/><rect x="-.7" y="-7.600" width="1.400" height="2.400" transform="rotate(135)"/><rect x="-.7" y="-7.600" width="1.400" height="2.400" transform="rotate(180)"/><rect x="-.7" y="-7.600" width="1.400" height="2.400" transform="rotate(225)"/><rect x="-.7" y="-7.600" width="1.400" height="2.400" transform="rotate(270)"/><rect x="-.7" y="-7.600" width="1.400" height="2.400" transform="rotate(315)"/></g><circle r="3.700" fill="none" stroke="#6685c2" stroke-width="1.500"/><circle r="1.700" fill="#6685c2"/></svg>
<div style="left:836.4px;top:117.6px;width:21px;height:21px;border-radius:50%;background:#3584e4"></div>
<svg style="left:841.70px;top:123.00px" width="10.4" height="10" viewBox="0 0 16 16" ><g fill="#fff"><rect x="5.4" y="0.4" width="5.2" height="4.6" rx=".6"/><rect x="7.3" y="4.8" width="1.4" height="3.4"/><rect x="2.1" y="7.4" width="11.8" height="1.4"/><rect x="2.1" y="7.4" width="1.4" height="3.6"/><rect x="12.5" y="7.4" width="1.4" height="3.6"/><rect x="0.2" y="10.7" width="5.2" height="4.8" rx=".6"/><rect x="10.6" y="10.7" width="5.2" height="4.8" rx=".6"/></g></svg>
<svg style="left:848.80px;top:149.30px" width="7.6" height="7.4" viewBox="0 0 16 16" ><g fill="#dcdcdc"><rect x="5.4" y="0.4" width="5.2" height="4.6" rx=".6"/><rect x="7.3" y="4.8" width="1.4" height="3.4"/><rect x="2.1" y="7.4" width="11.8" height="1.4"/><rect x="2.1" y="7.4" width="1.4" height="3.6"/><rect x="12.5" y="7.4" width="1.4" height="3.6"/><rect x="0.2" y="10.7" width="5.2" height="4.8" rx=".6"/><rect x="10.6" y="10.7" width="5.2" height="4.8" rx=".6"/></g></svg>
<svg style="left:837.00px;top:208.20px" width="7.6" height="7.6" viewBox="0 0 16 16" ><circle cx="8" cy="8" r="6.800" fill="none" stroke="#6685c2" stroke-width="1.700"/><path d="M8 1.200a6.800 6.800 0 0 0 0 13.600z" fill="#6685c2"/></svg>
</div></div>
</body>
</html>
